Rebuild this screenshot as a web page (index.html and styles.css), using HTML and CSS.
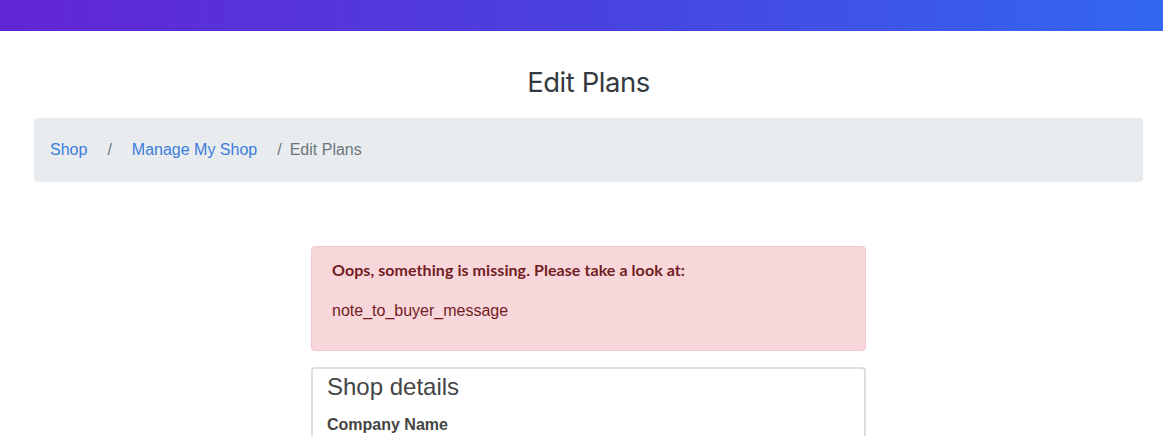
FILE: index.html
```html
<!DOCTYPE html>
<html lang="en">
<head>
<meta charset="utf-8">
<title>Edit Plans</title>
<link rel="stylesheet" href="styles.css">
</head>
<body>
<div class="topbar"></div>
<main class="page">
  <h1 class="title">Edit Plans</h1>
  <nav class="breadcrumb">
    <a class="crumb-link first" href="#">Shop</a><span class="sep">/</span><a class="crumb-link" href="#">Manage My Shop</a><span class="sep">/</span><span class="crumb-active">Edit Plans</span>
  </nav>
  <div class="column">
    <div class="alert">
      <div class="alert-heading">Oops, something is missing. Please take a look at:</div>
      <p class="alert-item">note_to_buyer_message</p>
    </div>
    <section class="card">
      <h2 class="card-title">Shop details</h2>
      <label class="field-label">Company Name</label>
    </section>
  </div>
</main>
</body>
</html>
```
FILE: styles.css
```css
html, body {
  margin: 0;
  padding: 0;
  background: #fff;
  font-family: "Liberation Sans", Arial, sans-serif;
  font-size: 16px;
  overflow: hidden;
}
.topbar {
  height: 31px;
  background: linear-gradient(90deg, #6226d3 0%, #4a41e0 50%, #3267ef 100%);
}
.page {
  margin: 0 20px 0 34px;
}
.title {
  margin: 34px 0 19px;
  text-align: center;
  font-family: Inter, "Noto Sans", sans-serif;
  font-weight: 400;
  font-size: 27.5px;
  line-height: 34px;
  letter-spacing: -0.45px;
  color: #343a40;
}
.breadcrumb {
  display: flex;
  align-items: center;
  height: 64px;
  box-sizing: border-box;
  padding: 0 16px;
  background: #e9ecef;
  border-radius: 4px;
  line-height: 24px;
}
.crumb-link {
  color: #3b7ddd;
  text-decoration: none;
  padding: 0 12px;
}
.crumb-link.first { padding-left: 0; }
.sep {
  color: #6c757d;
  padding: 0 8px;
}
.crumb-active { color: #6c757d; }
.column {
  width: 555px;
  margin: 64px auto 0;
}
.alert {
  background: #f8d7da;
  border: 1px solid #f5c6cb;
  border-radius: 4px;
  color: #721c24;
  padding: 13px 20px 13px;
}
.alert-heading {
  font-family: Lato, "Liberation Sans", sans-serif;
  font-weight: 700;
  font-size: 16px;
  line-height: 19px;
  letter-spacing: 0.07px;
}
.alert-item {
  margin: 20px 0 14px;
  line-height: 24px;
}
.card {
  margin-top: 16px;
  border: 2px solid #dedede;
  border-bottom: 0;
  border-radius: 4px 4px 0 0;
  padding: 3px 14px 20px;
  color: #454545;
}
.card-title {
  margin: 0;
  font-weight: 400;
  font-size: 24px;
  line-height: 29px;
}
.field-label {
  display: block;
  margin-top: 12px;
  font-weight: 700;
  line-height: 24px;
}
```
